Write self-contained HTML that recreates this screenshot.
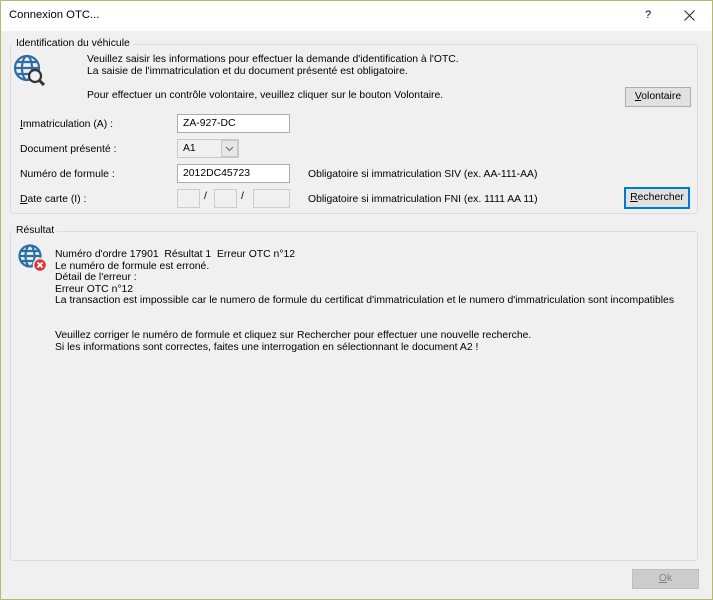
<!DOCTYPE html>
<html><head><meta charset="utf-8"><style>
*{margin:0;padding:0;box-sizing:border-box}
body{width:713px;height:600px;background:#f0f0f0;font-family:"Liberation Sans",sans-serif;font-size:10.4px;color:#000;position:relative;overflow:hidden}
.a{position:absolute;white-space:nowrap}
.frame{position:absolute;left:0;top:0;width:713px;height:600px;border:1px solid #b5b96a;pointer-events:none}
.title{position:absolute;left:1px;top:1px;width:711px;height:30px;background:#fff}
.grp{position:absolute;border:1px solid #dcdcdc;border-radius:3px}
.lg{position:absolute;background:#f0f0f0;padding:0 3px}
.in{position:absolute;height:19px;background:#fff;border:1px solid #acacac;padding:3px 5px}
.dis{position:absolute;height:19px;background:#f0f0f0;border:1px solid #ccc}
.btn{position:absolute;background:#e1e1e1;border:1px solid #adadad;text-align:center;line-height:18px}
u{text-decoration:underline}
</style></head><body>
<div class="title"></div>
<div class="a" style="left:9px;top:9px;font-size:11.3px">Connexion OTC...</div>
<div class="a" style="left:645px;top:9px;font-size:11px">?</div>
<svg class="a" style="left:684px;top:10px" width="11" height="11"><path d="M0.5 0.5L10.5 10.5M10.5 0.5L0.5 10.5" stroke="#222" stroke-width="1"/></svg>

<div class="grp" style="left:10px;top:44px;width:688px;height:170px"></div>
<div class="lg a" style="left:13px;top:38px">Identification du véhicule</div>
<svg class="a" style="left:13px;top:54px" width="32" height="32" viewBox="0 0 32 32"><g fill="none" stroke="#2d6ea8" stroke-width="2.2"><circle cx="14" cy="14" r="12"/><ellipse cx="14" cy="14" rx="5" ry="12"/><line x1="2" y1="14" x2="26" y2="14"/><line x1="4" y1="8" x2="24" y2="8"/><line x1="4" y1="20" x2="24" y2="20"/></g><circle cx="22" cy="22" r="6" fill="#f0f0f0" stroke="#333" stroke-width="2.2"/><line x1="26" y1="26" x2="31" y2="31" stroke="#333" stroke-width="3"/></svg>
<div class="a" style="left:87px;top:54px">Veuillez saisir les informations pour effectuer la demande d'identification à l'OTC.</div>
<div class="a" style="left:87px;top:66px">La saisie de l'immatriculation et du document présenté est obligatoire.</div>
<div class="a" style="left:87px;top:90px">Pour effectuer un contrôle volontaire, veuillez cliquer sur le bouton Volontaire.</div>
<div class="btn" style="left:625px;top:87px;width:66px;height:20px"><u>V</u>olontaire</div>

<div class="a" style="left:20px;top:119px"><u>I</u>mmatriculation (A) :</div>
<div class="in" style="left:177px;top:114px;width:113px">ZA-927-DC</div>
<div class="a" style="left:20px;top:144px">Document présenté :</div>
<div class="in" style="left:177px;top:139px;width:62px;background:#f0f0f0;border-color:#c8c8c8">A1</div>
<div class="a" style="left:221px;top:140px;width:17px;height:17px;border:1px solid #c8c8c8;background:#e6e6e6"><svg width="15" height="15"><path d="M4 6l3.5 3.5L11 6" fill="none" stroke="#666" stroke-width="1"/></svg></div>
<div class="a" style="left:20px;top:169px">Numéro de formule :</div>
<div class="in" style="left:177px;top:164px;width:113px">2012DC45723</div>
<div class="a" style="left:308px;top:169px">Obligatoire si immatriculation SIV (ex. AA-111-AA)</div>
<div class="a" style="left:20px;top:194px"><u>D</u>ate carte (I) :</div>
<div class="dis" style="left:177px;top:189px;width:23px"></div>
<div class="a" style="left:204px;top:191px">/</div>
<div class="dis" style="left:214px;top:189px;width:23px"></div>
<div class="a" style="left:241px;top:191px">/</div>
<div class="dis" style="left:253px;top:189px;width:37px"></div>
<div class="a" style="left:308px;top:194px">Obligatoire si immatriculation FNI (ex. 1111 AA 11)</div>
<div class="btn" style="left:624px;top:187px;width:66px;height:22px;border:2px solid #0078d7;line-height:18px"><u>R</u>echercher</div>

<div class="grp" style="left:10px;top:231px;width:688px;height:330px"></div>
<div class="lg a" style="left:13px;top:225px">Résultat</div>
<svg class="a" style="left:18px;top:244px" width="30" height="30" viewBox="0 0 30 30"><g fill="none" stroke="#2d6ea8" stroke-width="2.2"><circle cx="12" cy="12" r="10.5"/><ellipse cx="12" cy="12" rx="4.5" ry="10.5"/><line x1="1.5" y1="12" x2="22.5" y2="12"/><line x1="3" y1="7" x2="21" y2="7"/><line x1="3" y1="17" x2="21" y2="17"/></g><circle cx="22" cy="21" r="6.5" fill="#d9383a" stroke="#f0f0f0" stroke-width="1.5"/><path d="M19.5 18.5l5 5M24.5 18.5l-5 5" stroke="#fff" stroke-width="1.8"/></svg>
<div class="a" style="left:55px;top:249px;line-height:11.6px">Numéro d'ordre 17901&nbsp; Résultat 1&nbsp; Erreur OTC n°12<br>Le numéro de formule est erroné.<br>Détail de l'erreur :<br>Erreur OTC n°12<br>La transaction est impossible car le numero de formule du certificat d'immatriculation et le numero d'immatriculation sont incompatibles<br><br><br>Veuillez corriger le numéro de formule et cliquez sur Rechercher pour effectuer une nouvelle recherche.<br>Si les informations sont correctes, faites une interrogation en sélectionnant le document A2 !</div>

<div class="btn" style="left:632px;top:569px;width:67px;height:20px;background:#ccc;border-color:#bfbfbf;color:#838383"><u>O</u>k</div>
<div class="frame"></div>
</body></html>
